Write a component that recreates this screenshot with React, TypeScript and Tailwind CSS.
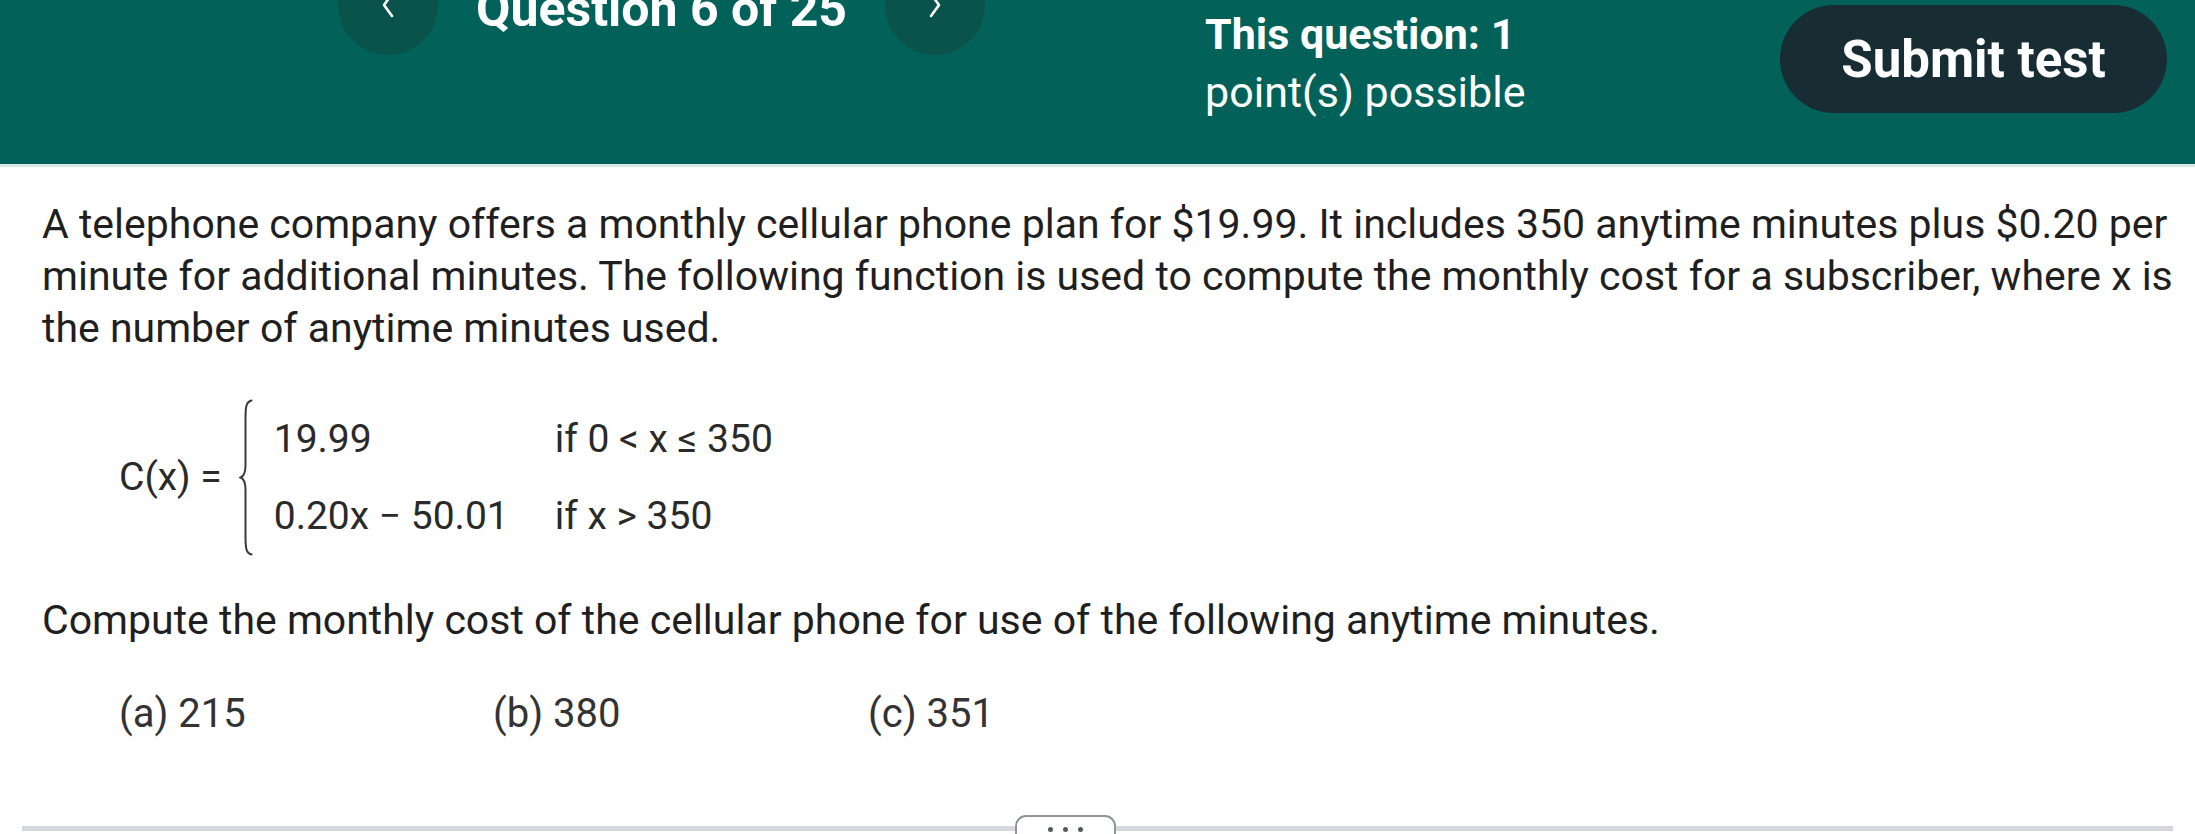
import React from "react";

function Chevron({ dir }: { dir: "left" | "right" }) {
  return (
    <svg width="16" height="26" viewBox="0 0 16 26" fill="none">
      {dir === "left" ? (
        <polyline points="12,2 4,13 12,24" stroke="white" strokeWidth="2.6" strokeLinecap="round" strokeLinejoin="round" />
      ) : (
        <polyline points="4,2 12,13 4,24" stroke="white" strokeWidth="2.6" strokeLinecap="round" strokeLinejoin="round" />
      )}
    </svg>
  );
}

function Brace() {
  return (
    <svg width="14" height="157" viewBox="0 0 14 157" fill="none">
      <path
        d="M12.5,1.5 C7,3 6.5,8 6.5,20 L6.5,66 C6.5,74 4.5,77.5 1.5,78.5 C4.5,79.5 6.5,83 6.5,91 L6.5,137 C6.5,149 7,154 12.5,155.5"
        stroke="#3a3a3a"
        strokeWidth="2"
        strokeLinecap="round"
      />
    </svg>
  );
}

export default function App() {
  return (
    <div className="w-[2195px] bg-white text-[#202124] font-['Roboto',sans-serif]">
      {/* Header */}
      <div className="h-[167px] bg-[#02625a] border-b-[3px] border-[#dbe7e6] overflow-hidden flex items-start pl-[338px] pr-[28px]">
        <div className="flex items-center gap-[38px] mt-[-45px]">
          <div className="w-[100px] h-[100px] rounded-full bg-[#0a534b] flex items-center justify-center">
            <Chevron dir="left" />
          </div>
          <div className="text-white font-bold text-[50px] leading-[50px] mt-[8px]">
            Question 6 of 25
          </div>
          <div className="w-[100px] h-[100px] rounded-full bg-[#0a534b] flex items-center justify-center">
            <Chevron dir="right" />
          </div>
        </div>
        <div className="ml-[220px] mt-[5px] text-white text-[43px] leading-[58px]">
          <div className="font-bold">This question: 1</div>
          <div>point(s) possible</div>
        </div>
        <div className="ml-auto mt-[5px] w-[387px] h-[108px] rounded-full bg-[#172c33] flex items-center justify-center">
          <span className="text-white font-bold text-[51px] leading-none">Submit test</span>
        </div>
      </div>

      {/* Body */}
      <div className="pl-[42px]">
        <div className="mt-[31px] text-[41px] leading-[52px] text-[#1f1f1f]">
          <div className="whitespace-nowrap">
            A telephone company offers a monthly cellular phone plan for $19.99. It includes 350 anytime minutes plus $0.20 per
          </div>
          <div className="whitespace-nowrap">
            minute for additional minutes. The following function is used to compute the monthly cost for a subscriber, where x is
          </div>
          <div className="whitespace-nowrap">the number of anytime minutes used.</div>
        </div>

        <div className="mt-[45px] ml-[77px] flex items-center text-[39px] text-[#2a2a2a]">
          <span className="leading-none">C(x) =</span>
          <span className="ml-[17px] flex">
            <Brace />
          </span>
          <div className="ml-[21px] grid grid-cols-[281px_auto] grid-rows-[77px_77px] items-center leading-none">
            <span>19.99</span>
            <span>if 0 &lt; x ≤ 350</span>
            <span>0.20x − 50.01</span>
            <span>if x &gt; 350</span>
          </div>
        </div>

        <div className="mt-[38px] text-[41px] leading-[52px] text-[#1f1f1f] whitespace-nowrap">
          Compute the monthly cost of the cellular phone for use of the following anytime minutes.
        </div>

        <div className="mt-[42px] ml-[77px] flex text-[40px] leading-[52px] text-[#333333]">
          <div className="w-[374px]">(a) 215</div>
          <div className="w-[375px]">(b) 380</div>
          <div className="w-[374px]">(c) 351</div>
        </div>
      </div>

      {/* Bottom divider */}
      <div className="relative mt-[75px] mx-[22px] h-[40px] pt-[11px]">
        <div className="h-[5px] bg-[#d4d7db]" />
        <div className="absolute left-[993px] top-0 w-[101px] h-[34px] rounded-[11px] border-2 border-[#8f959b] bg-white flex justify-center gap-[10px] pt-[10px]">
          <span className="w-[5px] h-[5px] rounded-full bg-[#55595e]" />
          <span className="w-[5px] h-[5px] rounded-full bg-[#55595e]" />
          <span className="w-[5px] h-[5px] rounded-full bg-[#55595e]" />
        </div>
      </div>
    </div>
  );
}
